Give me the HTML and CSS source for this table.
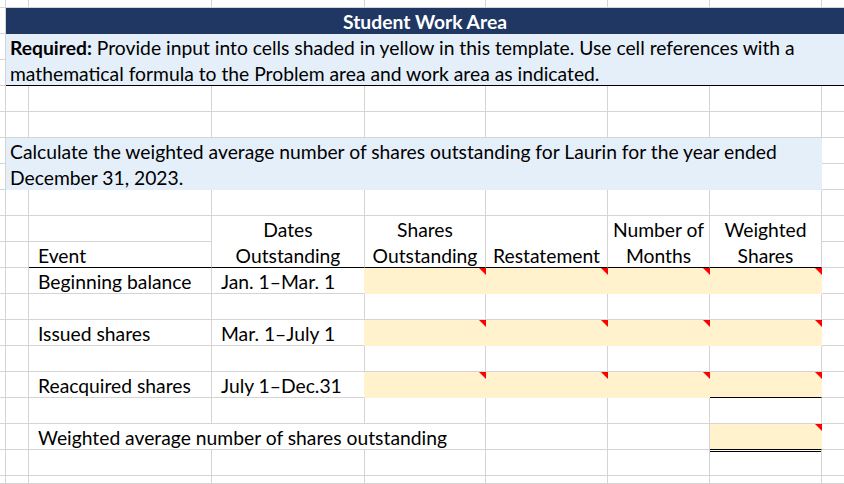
FILE: index.html
```html
<!DOCTYPE html>
<html lang="en">
<head>
<meta charset="utf-8">
<title>Student Work Area</title>
<link rel="stylesheet" href="styles.css">
</head>
<body>
<div class="sheet">
  <!-- row 0 -->
  <div class="c"></div><div class="c"></div><div class="c"></div><div class="c"></div><div class="c"></div><div class="c"></div><div class="c"></div><div class="c"></div><div class="c"></div>
  <!-- row 1 -->
  <div class="c"></div>
  <div class="c navy t">Student Work Area</div>
  <!-- rows 2-3 -->
  <div class="c"></div>
  <div class="c req t pad"><b>Required:</b> Provide input into cells shaded in yellow in this template. Use cell references with a<br>mathematical formula to the Problem area and work area as indicated.</div>
  <div class="c"></div>
  <!-- row 4 -->
  <div class="c"></div><div class="c"></div><div class="c"></div><div class="c"></div><div class="c"></div><div class="c"></div><div class="c"></div><div class="c"></div><div class="c"></div>
  <!-- row 5 -->
  <div class="c"></div><div class="c"></div><div class="c"></div><div class="c"></div><div class="c"></div><div class="c"></div><div class="c"></div><div class="c"></div><div class="c"></div>
  <!-- rows 6-7 -->
  <div class="c"></div>
  <div class="c calc t pad">Calculate the weighted average number of shares outstanding for Laurin for the year ended<br>December 31, 2023.</div>
  <div class="c"></div>
  <div class="c"></div>
  <div class="c"></div>
  <!-- row 8 -->
  <div class="c"></div><div class="c"></div><div class="c"></div><div class="c"></div><div class="c"></div><div class="c"></div><div class="c"></div><div class="c"></div><div class="c"></div>
  <!-- rows 9-10 -->
  <div class="c"></div><div class="c"></div><div class="c"></div>
  <div class="c hd t">Dates<br>Outstanding</div>
  <div class="c hd t">Shares<br>Outstanding</div>
  <div class="c hd t"><br>Restatement</div>
  <div class="c hd t">Number of<br>Months</div>
  <div class="c hd t">Weighted<br>Shares</div>
  <div class="c"></div>
  <div class="c"></div><div class="c"></div>
  <div class="c t ind under">Event</div>
  <div class="c"></div>
  <!-- row 11 -->
  <div class="c"></div><div class="c"></div>
  <div class="c t ind">Beginning balance</div>
  <div class="c t ind pre-y">Jan. 1–Mar. 1</div>
  <div class="c y"></div><div class="c y"></div><div class="c y"></div><div class="c y"></div>
  <div class="c"></div>
  <!-- row 12 -->
  <div class="c"></div><div class="c"></div><div class="c"></div><div class="c"></div><div class="c"></div><div class="c"></div><div class="c"></div><div class="c"></div><div class="c"></div>
  <!-- row 13 -->
  <div class="c"></div><div class="c"></div>
  <div class="c t ind">Issued shares</div>
  <div class="c t ind pre-y">Mar. 1–July 1</div>
  <div class="c y"></div><div class="c y"></div><div class="c y"></div><div class="c y"></div>
  <div class="c"></div>
  <!-- row 14 -->
  <div class="c"></div><div class="c"></div><div class="c"></div><div class="c"></div><div class="c"></div><div class="c"></div><div class="c"></div><div class="c"></div><div class="c"></div>
  <!-- row 15 -->
  <div class="c"></div><div class="c"></div>
  <div class="c t ind">Reacquired shares</div>
  <div class="c t ind pre-y">July 1–Dec.31</div>
  <div class="c y"></div><div class="c y"></div><div class="c y"></div><div class="c y total"></div>
  <div class="c"></div>
  <!-- row 16 -->
  <div class="c"></div><div class="c"></div><div class="c"></div><div class="c"></div><div class="c"></div><div class="c"></div><div class="c"></div><div class="c"></div><div class="c"></div>
  <!-- row 17 -->
  <div class="c"></div><div class="c"></div>
  <div class="c t ind wide">Weighted average number of shares outstanding</div>
  <div class="c"></div><div class="c"></div>
  <div class="c y grand"></div>
  <div class="c"></div>
  <!-- row 18 -->
  <div class="c"></div><div class="c"></div><div class="c"></div><div class="c"></div><div class="c"></div><div class="c"></div><div class="c"></div><div class="c dbl"></div><div class="c"></div>
  <!-- row 19 -->
  <div class="c"></div><div class="c"></div><div class="c"></div><div class="c"></div><div class="c"></div><div class="c"></div><div class="c"></div><div class="c"></div><div class="c"></div>
</div>
</body>
</html>
```
FILE: styles.css
```css
html, body {
  margin: 0;
  padding: 0;
  background: #ffffff;
  overflow: hidden;
}

body {
  font-family: Lato, "Liberation Sans", sans-serif;
  font-size: 19.3px;
  color: #000000;
}

.sheet {
  display: grid;
  grid-template-columns: 6px 23px 183px 153px 121px 122px 102px 112px 23px;
  grid-template-rows: 8px repeat(18, 26px) 8px;
  width: 844px;
  height: 484px;
}

.c {
  box-sizing: border-box;
  border-right: 1px solid #d4d4d4;
  border-bottom: 1px solid #d4d4d4;
  position: relative;
  min-width: 0;
}

.t {
  white-space: nowrap;
  line-height: 26px;
  padding-top: 1px;
}

.pad { padding-left: 4px; }
.ind { padding-left: 9px; }

.navy {
  grid-column: span 8;
  background: #203764;
  border-color: #203764;
  color: #ffffff;
  font-weight: 700;
  text-align: center;
}

.req {
  grid-column: span 8;
  grid-row: span 2;
  background: #e5effa;
  border-right: none;
  border-bottom: 1px solid #000000;
}

.calc {
  grid-column: span 7;
  grid-row: span 2;
  background: #e5effa;
  border-right-color: #e5effa;
  border-bottom-color: #e5effa;
}

.hd {
  grid-row: span 2;
  text-align: center;
  border-bottom: 1px solid #000000;
}

.under { border-bottom: 1px solid #000000; }

.wide { grid-column: span 3; }

.pre-y { border-right-color: #fff2cc; }

.y {
  background: #fff2cc;
  border-right-color: #fff2cc;
  border-bottom-color: #fff2cc;
}

.y::after {
  content: "";
  position: absolute;
  top: 0;
  right: -1px;
  width: 0;
  height: 0;
  border-top: 7px solid #ff0000;
  border-left: 7px solid transparent;
}

.total { border-bottom: 1px solid #000000; }

.grand { border-bottom: 1px solid #000000; }

.dbl { box-shadow: inset 0 1px 0 #ffffff, inset 0 2px 0 #000000; }
```
